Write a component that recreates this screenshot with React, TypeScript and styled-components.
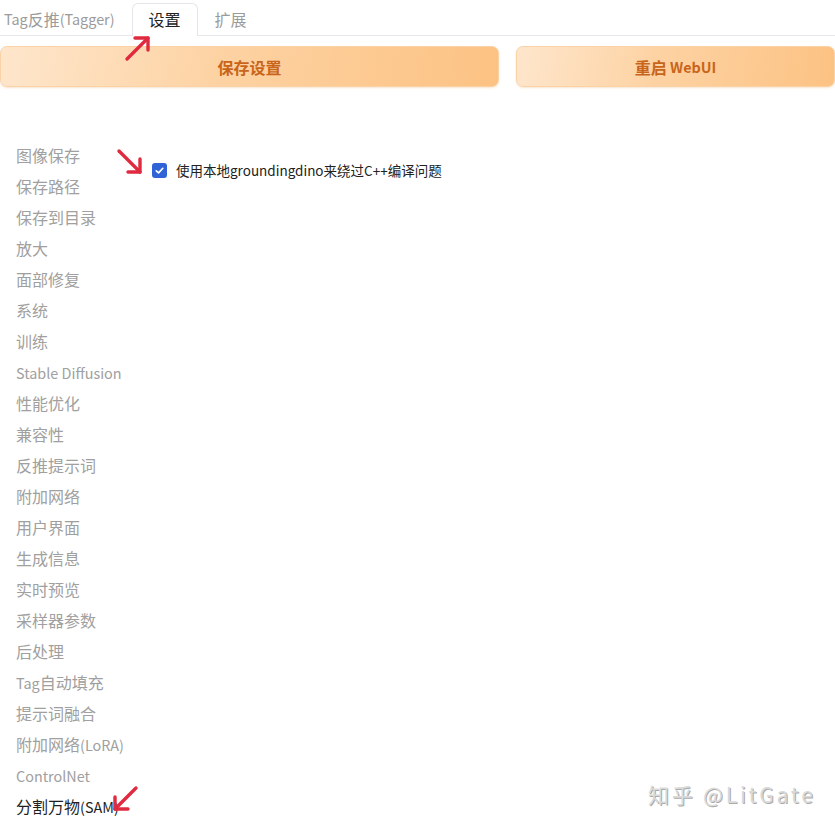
import React from "react";
import styled, { createGlobalStyle } from "styled-components";

const Global = createGlobalStyle`
  html, body { margin: 0; padding: 0; background: #ffffff; }
  body { font-family: "Noto Sans CJK SC", "Noto Sans", sans-serif; overflow: hidden; }
  * { box-sizing: border-box; }
`;

const Page = styled.div`
  position: relative;
  width: 835px;
  height: 828px;
  overflow: hidden;
  background: #fff;
`;

const TabBar = styled.div`
  display: flex;
  align-items: flex-end;
  height: 36px;
  margin-left: -13px;
  border-bottom: 1px solid #e8e8ec;
`;

const Tab = styled.div<{ $active?: boolean }>`
  height: ${(p) => (p.$active ? "33px" : "32px")};
  padding: 0 16px 2px;
  display: flex;
  align-items: center;
  font-size: 16px;
  color: ${(p) => (p.$active ? "#222" : "#9b9b9b")};
  background: #fff;
  border: 1px solid ${(p) => (p.$active ? "#e6e6ea" : "transparent")};
  border-bottom: none;
  border-radius: 6px 6px 0 0;
  margin-bottom: ${(p) => (p.$active ? "-1px" : "0")};
  white-space: pre;
`;

const ButtonRow = styled.div`
  display: grid;
  grid-template-columns: 499px 1fr;
  gap: 17px;
  margin-top: 10px;
`;

const OrangeButton = styled.div`
  height: 41px;
  border-radius: 7px;
  border: 1px solid #fbd2a6;
  background: linear-gradient(100deg, #fee6cc 0%, #fdd2a2 45%, #fcc283 100%);
  box-shadow: 0 1px 2px rgba(230, 150, 70, 0.25);
  display: flex;
  align-items: center;
  justify-content: center;
  font-size: 16px;
  font-weight: 700;
  color: #c8651b;
  white-space: pre;
`;

const Body = styled.div`
  display: flex;
  margin-top: 53px;
`;

const Sidebar = styled.div`
  width: 152px;
  padding-left: 16px;
  display: flex;
  flex-direction: column;
`;

const NavItem = styled.div<{ $active?: boolean }>`
  height: 31px;
  line-height: 31px;
  font-size: 16px;
  color: ${(p) => (p.$active ? "#1f1f1f" : "#a0a0a0")};
  white-space: pre;
`;

const Content = styled.div`
  padding-top: 20px;
`;

const CheckRow = styled.label`
  display: flex;
  align-items: center;
  gap: 9px;
  font-size: 13.5px;
  color: #222;
  white-space: pre;
`;

const Box = styled.span`
  width: 15px;
  height: 15px;
  border-radius: 3px;
  background: #2f63d6;
  display: flex;
  align-items: center;
  justify-content: center;
`;

const Latin = styled.span`
  font-size: 0.9em;
`;

const Arrow = styled.svg<{ $x: number; $y: number }>`
  position: absolute;
  left: ${(p) => p.$x}px;
  top: ${(p) => p.$y}px;
  overflow: visible;
`;

const Watermark = styled.div`
  position: absolute;
  left: 648px;
  top: 779px;
  font-family: "Noto Sans CJK SC", sans-serif;
  font-size: 21px;
  letter-spacing: 2.8px;
  color: #dadada;
  text-shadow: 1px 1px 0 #aaaaaa;
`;

function Mixed({ text }: { text: string }) {
  const parts = text.split(/([A-Za-z0-9()+@ ]+)/).filter((s) => s.length > 0);
  return (
    <>
      {parts.map((p, i) =>
        /^[A-Za-z0-9()+@ ]+$/.test(p) ? <Latin key={i}>{p}</Latin> : <React.Fragment key={i}>{p}</React.Fragment>
      )}
    </>
  );
}

const items = [
  "图像保存",
  "保存路径",
  "保存到目录",
  "放大",
  "面部修复",
  "系统",
  "训练",
  "Stable Diffusion",
  "性能优化",
  "兼容性",
  "反推提示词",
  "附加网络",
  "用户界面",
  "生成信息",
  "实时预览",
  "采样器参数",
  "后处理",
  "Tag自动填充",
  "提示词融合",
  "附加网络(LoRA)",
  "ControlNet",
  "分割万物(SAM)",
];

function RedArrow({ x, y, rot }: { x: number; y: number; rot: number }) {
  return (
    <Arrow $x={x} $y={y} width="28" height="28" viewBox="0 0 28 28">
      <g transform={`rotate(${rot} 14 14)`} stroke="#e02a3f" strokeWidth="3.4" strokeLinecap="round" fill="none">
        <path d="M3 25 L24 4" />
        <path d="M11 4 L24 4 L24 16" strokeLinejoin="round" />
      </g>
    </Arrow>
  );
}

export default function App() {
  return (
    <Page>
      <Global />
      <TabBar>
        <Tab>
          <Mixed text="Tag反推(Tagger)" />
        </Tab>
        <Tab $active>设置</Tab>
        <Tab>扩展</Tab>
      </TabBar>
      <ButtonRow>
        <OrangeButton>保存设置</OrangeButton>
        <OrangeButton>
          <Mixed text="重启 WebUI" />
        </OrangeButton>
      </ButtonRow>
      <Body>
        <Sidebar>
          {items.map((t, i) => (
            <NavItem key={t} $active={i === items.length - 1}>
              <Mixed text={t} />
            </NavItem>
          ))}
        </Sidebar>
        <Content>
          <CheckRow>
            <Box>
              <svg width="11" height="11" viewBox="0 0 12 12">
                <path d="M2.5 6.3 L5 8.6 L9.6 3.6" stroke="#fff" strokeWidth="1.8" fill="none" strokeLinecap="round" strokeLinejoin="round" />
              </svg>
            </Box>
            <span>使用本地groundingdino来绕过C++编译问题</span>
          </CheckRow>
        </Content>
      </Body>
      <RedArrow x={124} y={34} rot={0} />
      <RedArrow x={116} y={148} rot={90} />
      <RedArrow x={111} y={785} rot={180} />
      <Watermark>知乎 @LitGate</Watermark>
    </Page>
  );
}
